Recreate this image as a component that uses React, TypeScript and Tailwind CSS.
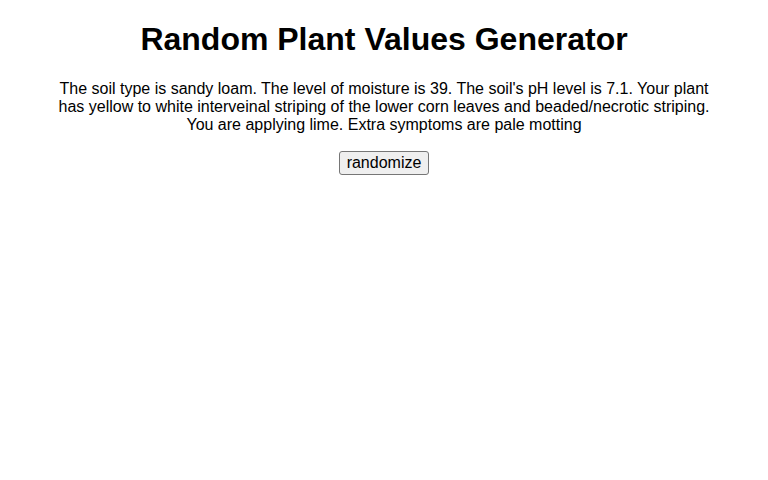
export default function App() {
    return (
        <div className="min-h-screen bg-white text-black text-center px-2 py-[21.44px] font-['Liberation_Sans',Arial,sans-serif]">
            <h1 className="text-[32px] leading-[36.8px] font-bold">Random Plant Values Generator</h1>
            <p className="mx-auto mt-[21.44px] max-w-[670px] text-[16px] leading-[18.4px]">
                The soil type is sandy loam. The level of moisture is 39. The soil's pH level is 7.1. Your plant has yellow to
                white interveinal striping of the lower corn leaves and beaded/necrotic striping. You are applying lime. Extra
                symptoms are pale motting
            </p>
            <div className="mt-4">
                <button className="bg-[#efefef] border border-[#767676] rounded-[3px] px-[7px] py-[2px] text-[16px] leading-[18.4px] hover:bg-[#e5e5e5]">
                    randomize
                </button>
            </div>
        </div>
    );
}
